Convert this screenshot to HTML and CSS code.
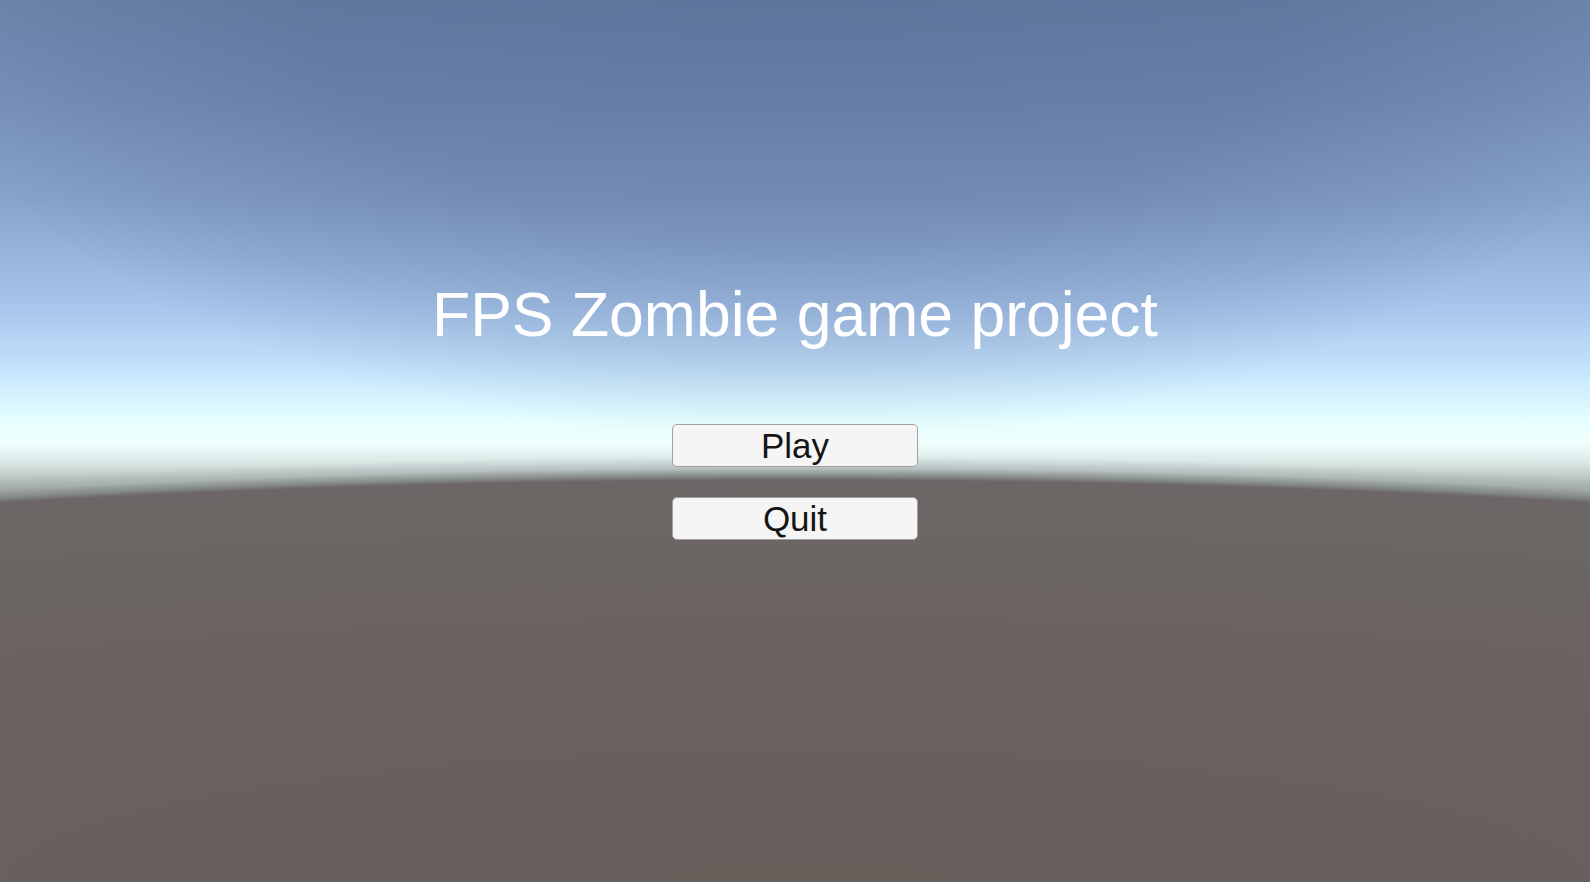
FILE: index.html
```html
<!DOCTYPE html>
<html lang="en">
<head>
    <meta charset="UTF-8">
    <meta name="viewport" content="width=device-width, initial-scale=1.0">
    <title>FPS Zombie game project</title>
    <link rel="stylesheet" href="styles.css">
</head>
<body>
    <div class="menu">
        <h1 class="title">FPS Zombie game project</h1>

        <div class="menu-buttons">
            <button class="menu-btn" id="playBtn">Play</button>
            <button class="menu-btn" id="quitBtn">Quit</button>
        </div>
    </div>
</body>
</html>
```

FILE: styles.css
```css
html, body {
    height: 100%;
}
body {
    margin: 0;
    overflow: hidden;
    font-family: "Liberation Sans", Arial, sans-serif;
    background-color: #6a6461;
    background-image:
        /* ground plane, curving down towards the sides */
        radial-gradient(ellipse 2400px 407px at 50% 887px,
            #665e59 0%,
            #6a6361 70%,
            #6c6766 100%,
            rgba(125, 130, 130, 0.8) 101.2%,
            rgba(150, 160, 160, 0.4) 103%,
            rgba(190, 205, 205, 0) 106%),
        /* sky is darker straight above */
        radial-gradient(ellipse 880px 440px at 50% 0,
            rgba(55, 75, 115, 0.3) 0%,
            rgba(55, 75, 115, 0.26) 55%,
            rgba(55, 75, 115, 0.12) 82%,
            rgba(55, 75, 115, 0) 100%),
        /* sky towards the horizon */
        linear-gradient(to bottom,
            #6d87ad 0,
            #7892ba 100px,
            #88a3cb 200px,
            #98b5de 260px,
            #a9c7ed 310px,
            #c0defa 360px,
            #d6f4ff 398px,
            #e4fefe 420px,
            #f0fffd 443px,
            #d8e6e4 463px,
            #aab3b1 488px,
            #8c908f 510px,
            #6c6766 530px);
}
.menu {
    display: flex;
    flex-direction: column;
    align-items: center;
    padding-top: 283px;
}
.title {
    margin: 0;
    font-size: 62.5px;
    font-weight: normal;
    line-height: 1;
    color: #ffffff;
}
.menu-buttons {
    display: flex;
    flex-direction: column;
    gap: 30px;
    margin-top: 78.5px;
}
.menu-btn {
    width: 246px;
    height: 43px;
    padding: 0;
    font-family: "Liberation Sans", Arial, sans-serif;
    font-size: 35px;
    line-height: 41px;
    color: #151515;
    background-color: #f5f5f5;
    border: 1px solid #a0a0a0;
    border-radius: 5px;
    cursor: pointer;
}
```
